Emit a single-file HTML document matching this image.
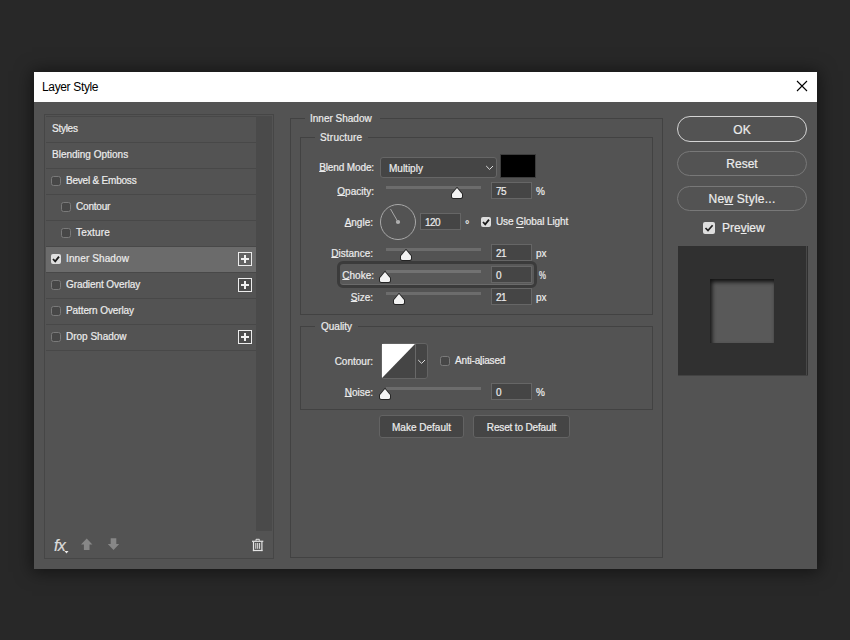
<!DOCTYPE html>
<html><head><meta charset="utf-8"><title>Layer Style</title>
<style>
*{box-sizing:border-box;margin:0;padding:0}
html,body{width:850px;height:640px;overflow:hidden;background:#282828;font-family:"Liberation Sans",sans-serif;font-size:10px;color:#ececec;-webkit-text-stroke-width:0.2px}
.abs{position:absolute}
#dlg{position:absolute;left:34px;top:72px;width:783px;height:497px;background:#535353;box-shadow:0 1px 16px 2px rgba(0,0,0,.52)}
#title{position:absolute;left:0;top:0;width:783px;height:30px;background:#fff;color:#000;font-size:12px;line-height:30px;padding-left:8px}
.t{position:absolute;white-space:nowrap;line-height:14px;height:14px}
u{text-decoration:underline;text-underline-offset:0px;text-decoration-skip-ink:none}
.btn u,.big u{text-underline-offset:1px}
.row{position:absolute;left:46px;width:210px;height:26px;border-bottom:1px solid #484848}
.cb{position:absolute;width:10px;height:10px;border:1px solid #7a7a7a;border-radius:2.5px;background:#474747}
.cbw{position:absolute;width:10px;height:10px;border-radius:2px;background:#dedede}
.plus{position:absolute;width:14px;height:14px;border:1px solid #ececec;background:rgba(0,0,0,.08)}
.plus:before{content:"";position:absolute;left:2px;top:5px;width:8px;height:2px;background:#f0f0f0}
.plus:after{content:"";position:absolute;left:5px;top:2px;width:2px;height:8px;background:#f0f0f0}
.fs{position:absolute;border:1px solid #424242}
.leg{position:absolute;background:#535353;line-height:14px;height:14px;padding:0 6px;white-space:nowrap}
.in{position:absolute;height:17px;width:41px;background:#454545;border:1px solid #666;line-height:17px;padding-left:4px;letter-spacing:-0.5px}
.trk{position:absolute;left:386px;width:95px;height:3px;background:#6c6c6c}
.btn{position:absolute;left:677px;width:130px;height:25px;border:1px solid #787878;border-radius:13px;text-align:center;font-size:12px;line-height:24px}
.sbtn{position:absolute;padding-top:1px;height:21px;background:#454545;border:1px solid #666;border-radius:3px;text-align:center;line-height:19px}
</style></head><body>
<div id="dlg"></div>
<div class="abs" style="left:34px;top:72px;width:783px;height:30px;background:#fff"></div>
<div class="t" style="left:42px;top:80px;font-size:12px;color:#000;letter-spacing:-0.35px;-webkit-text-stroke-width:0">Layer Style</div>
<svg class="abs" style="left:795px;top:80px" width="13" height="13" viewBox="0 0 13 13"><path d="M2 1L12 11M12 1L2 11" stroke="#000" stroke-width="1.1" fill="none"/></svg>

<!-- left panel -->
<div class="fs" style="left:44px;top:114px;width:230px;height:445px;border-color:#464646"></div>
<div class="abs" style="left:256px;top:116px;width:16px;height:415px;background:#4a4a4a"></div>
<div class="abs" style="left:46px;top:116px;width:210px;height:1px;background:#484848"></div>
<div class="row" style="top:117px"></div>
<div class="row" style="top:143px"></div>
<div class="row" style="top:169px"></div>
<div class="row" style="top:195px"></div>
<div class="row" style="top:221px"></div>
<div class="row" style="top:247px;background:#6b6b6b"></div>
<div class="row" style="top:273px"></div>
<div class="row" style="top:299px"></div>
<div class="row" style="top:325px"></div>

<div class="t" style="left:52px;top:122px;letter-spacing:-0.27px">Styles</div>
<div class="t" style="left:52px;top:148px">Blending Options</div>
<div class="cb" style="left:51px;top:176px"></div><div class="t" style="left:66px;top:174px;letter-spacing:-0.21px">Bevel &amp; Emboss</div>
<div class="cb" style="left:61px;top:202px"></div><div class="t" style="left:76px;top:200px;letter-spacing:-0.19px">Contour</div>
<div class="cb" style="left:61px;top:228px"></div><div class="t" style="left:76px;top:226px;letter-spacing:0.17px">Texture</div>
<div class="cbw" style="left:51px;top:254px"></div>
<svg class="abs" style="left:51px;top:254px" width="10" height="10" viewBox="0 0 10 10"><path d="M2 5L4.2 7.3L8 2.6" stroke="#1a1a1a" stroke-width="1.8" fill="none"/></svg>
<div class="t" style="left:66px;top:252px;letter-spacing:0.11px">Inner Shadow</div>
<div class="plus" style="left:238px;top:252px"></div>
<div class="cb" style="left:51px;top:280px"></div><div class="t" style="left:66px;top:278px;letter-spacing:-0.09px">Gradient Overlay</div>
<div class="plus" style="left:238px;top:278px"></div>
<div class="cb" style="left:51px;top:306px"></div><div class="t" style="left:66px;top:304px;letter-spacing:-0.1px">Pattern Overlay</div>
<div class="cb" style="left:51px;top:332px"></div><div class="t" style="left:66px;top:330px">Drop Shadow</div>
<div class="plus" style="left:238px;top:330px"></div>

<!-- bottom icons -->
<div class="t" style="left:54px;top:537px;font-size:16px;font-style:italic;height:18px;line-height:18px;color:#dcdcdc;letter-spacing:-0.6px">fx</div>
<svg class="abs" style="left:64px;top:551px" width="5" height="3" viewBox="0 0 5 3"><path d="M0.5 0H4.5L2.5 2.5Z" fill="#eee"/></svg>
<svg class="abs" style="left:80px;top:538px" width="14" height="13" viewBox="0 0 14 13"><path d="M6.7 0.5L12.4 6.6H9.5V12H3.9V6.6H1Z" fill="#878787"/></svg>
<svg class="abs" style="left:107px;top:538px" width="14" height="13" viewBox="0 0 14 13"><path d="M6.5 12L12.2 6H9.3V0.3H3.7V6H0.8Z" fill="#878787"/></svg>
<svg class="abs" style="left:251px;top:538px" width="13" height="14" viewBox="0 0 13 14"><g fill="#e4e4e4"><rect x="1" y="2.7" width="11.3" height="1.2"/><rect x="1.9" y="3.9" width="1.2" height="9.2"/><rect x="10.3" y="3.9" width="1.2" height="9.2"/><rect x="1.9" y="11.9" width="9.6" height="1.2"/><rect x="4.3" y="5" width="1" height="5.8"/><rect x="6.2" y="5" width="1" height="5.8"/><rect x="8.1" y="5" width="1" height="5.8"/></g><path d="M5 2.8V1.3H8.3V2.8" stroke="#e4e4e4" stroke-width="1" fill="none"/></svg>

<!-- main fieldset -->
<div class="fs" style="left:290px;top:118px;width:373px;height:440px"></div>
<div class="leg" style="left:305px;top:112px;padding:0 8px 0 5px">Inner Shadow</div>
<div class="fs" style="left:300px;top:137px;width:353px;height:178px"></div>
<div class="leg" style="left:315px;top:131px;letter-spacing:0.2px;padding:0 6px 0 5px">Structure</div>
<div class="fs" style="left:300px;top:326px;width:353px;height:84px"></div>
<div class="leg" style="left:315px;top:320px">Quality</div>

<!-- structure -->
<div class="t" style="right:476px;top:161px;letter-spacing:-0.12px"><u>B</u>lend Mode:</div>
<div class="sbtn" style="left:380px;top:157px;width:117px;text-align:left;padding-left:8px">Multiply</div>
<svg class="abs" style="left:485px;top:165px" width="9" height="6" viewBox="0 0 9 6"><path d="M1.2 1L4.6 4.4L8 1" stroke="#ddd" stroke-width="1" fill="none"/></svg>
<div class="abs" style="left:500px;top:154px;width:36px;height:24px;background:#000;border:1px solid #3d3d3d"></div>

<div class="t" style="right:476px;top:185px"><u>O</u>pacity:</div>
<div class="trk" style="top:186px"></div>
<svg class="abs thumb" style="left:450px;top:186px" width="14" height="14" viewBox="0 0 14 14"><path d="M7 2L12 8V10.4Q12 12 10.4 12H3.6Q2 12 2 10.4V8Z" fill="#f2f2f2" stroke="#232323" stroke-width="1.8" stroke-linejoin="round" paint-order="stroke"/></svg>
<div class="in" style="left:491px;top:182px">75</div>
<div class="t" style="left:536px;top:185px">%</div>

<div class="t" style="right:477px;top:216px"><u>A</u>ngle:</div>
<svg class="abs" style="left:379px;top:203px" width="38" height="38" viewBox="0 0 38 38"><circle cx="19" cy="19" r="17.5" fill="none" stroke="#a8a8a8" stroke-width="1"/><circle cx="19" cy="19" r="2.1" fill="#b2b2b2"/><path d="M19 19L11.5 6" stroke="#a8a8a8" stroke-width="1"/></svg>
<div class="in" style="left:420px;top:213px">120</div>
<div class="t" style="left:465px;top:217px;font-size:11px">°</div>
<div class="cbw" style="left:481px;top:217px"></div>
<svg class="abs" style="left:481px;top:217px" width="10" height="10" viewBox="0 0 10 10"><path d="M2 5L4.2 7.3L8 2.6" stroke="#1a1a1a" stroke-width="1.8" fill="none"/></svg>
<div class="t" style="left:496px;top:215px;letter-spacing:-0.12px">Use <u style="text-underline-offset:1.5px">G</u>lobal Light</div>

<div class="t" style="right:477px;top:247px"><u>D</u>istance:</div>
<div class="trk" style="top:248px"></div>
<svg class="abs thumb" style="left:399px;top:248px" width="14" height="14" viewBox="0 0 14 14"><path d="M7 2L12 8V10.4Q12 12 10.4 12H3.6Q2 12 2 10.4V8Z" fill="#f2f2f2" stroke="#232323" stroke-width="1.8" stroke-linejoin="round" paint-order="stroke"/></svg>
<div class="in" style="left:491px;top:244px">21</div>
<div class="t" style="left:536px;top:247px">px</div>

<div class="t" style="right:477px;top:291px"><u>S</u>ize:</div>
<div class="trk" style="top:292px"></div>
<svg class="abs thumb" style="left:392px;top:292px" width="14" height="14" viewBox="0 0 14 14"><path d="M7 2L12 8V10.4Q12 12 10.4 12H3.6Q2 12 2 10.4V8Z" fill="#f2f2f2" stroke="#232323" stroke-width="1.8" stroke-linejoin="round" paint-order="stroke"/></svg>
<div class="in" style="left:491px;top:288px">21</div>
<div class="t" style="left:536px;top:291px">px</div>

<div class="abs" style="left:337px;top:261px;width:200px;height:27px;border:3px solid #3b3b3b;border-radius:6px;background:#585858;box-shadow:inset 0 -1px 0 #6a6a6a"></div>
<div class="t" style="right:476px;top:269px"><u>C</u>hoke:</div>
<div class="trk" style="top:270px;background:#727272"></div>
<svg class="abs thumb" style="left:378px;top:270px" width="14" height="14" viewBox="0 0 14 14"><path d="M7 2L12 8V10.4Q12 12 10.4 12H3.6Q2 12 2 10.4V8Z" fill="#f2f2f2" stroke="#232323" stroke-width="1.8" stroke-linejoin="round" paint-order="stroke"/></svg>
<div class="in" style="left:491px;top:266px">0</div>
<div class="t" style="left:538.5px;top:269px;transform:scaleX(.78);transform-origin:0 0">%</div>

<!-- quality -->
<div class="t" style="right:477px;top:355px">Contour:</div>
<div class="abs" style="left:381px;top:343px;width:47px;height:36px;border:1px solid #646464;border-radius:3px;background:#454545"></div>
<svg class="abs" style="left:382px;top:344px" width="33" height="34" viewBox="0 0 33 34"><rect width="33" height="34" fill="#454545"/><path d="M0 0H33L0 34Z" fill="#fff"/></svg>
<div class="abs" style="left:415px;top:344px;width:1px;height:34px;background:#686868"></div>
<svg class="abs" style="left:417px;top:359px" width="9" height="6" viewBox="0 0 9 6"><path d="M1.2 1L4.6 4.4L8 1" stroke="#ddd" stroke-width="1" fill="none"/></svg>
<div class="cb" style="left:440px;top:356px"></div>
<div class="t" style="left:455px;top:354px;letter-spacing:-0.17px">Anti-a<u>l</u>iased</div>

<div class="t" style="right:477px;top:386px"><u>N</u>oise:</div>
<div class="trk" style="top:387px"></div>
<svg class="abs thumb" style="left:378px;top:387px" width="14" height="14" viewBox="0 0 14 14"><path d="M7 2L12 8V10.4Q12 12 10.4 12H3.6Q2 12 2 10.4V8Z" fill="#f2f2f2" stroke="#232323" stroke-width="1.8" stroke-linejoin="round" paint-order="stroke"/></svg>
<div class="in" style="left:491px;top:383px">0</div>
<div class="t" style="left:536px;top:386px">%</div>

<div class="sbtn" style="left:379px;top:415px;width:85px;height:23px;border-color:#636363;line-height:21px">Make Default</div>
<div class="sbtn" style="left:473px;top:415px;width:97px;height:23px;border-color:#636363;line-height:21px;letter-spacing:-0.15px">Reset to Default</div>

<!-- right column -->
<div class="btn" style="top:116px;height:25.5px;border-color:#d4d4d4;border-width:1.5px;line-height:23px;padding-top:2px">OK</div>
<div class="btn" style="top:150.5px">Reset</div>
<div class="btn" style="top:185.5px;letter-spacing:0.25px">Ne<u>w</u> Style...</div>
<div class="cbw" style="left:703px;top:222px;width:12px;height:12px"></div>
<svg class="abs" style="left:703px;top:222px" width="12" height="12" viewBox="0 0 12 12"><path d="M2.5 6L5 8.6L9.6 3.2" stroke="#222" stroke-width="1.7" fill="none"/></svg>
<div class="t big" style="left:722px;top:220px;font-size:12px;line-height:16px;height:16px">Pre<u>v</u>iew</div>
<div class="abs" style="left:678px;top:246px;width:130px;height:130px;background:#303030;border-bottom:1px solid #424242;box-shadow:inset -1px 0 0 #303030,inset -2px 0 0 #484848"></div>
<div class="abs" style="left:710px;top:279px;width:64px;height:64px;background:#595959;box-shadow:inset 2px 3px 4px rgba(0,0,0,.8)"></div>
</body></html>
